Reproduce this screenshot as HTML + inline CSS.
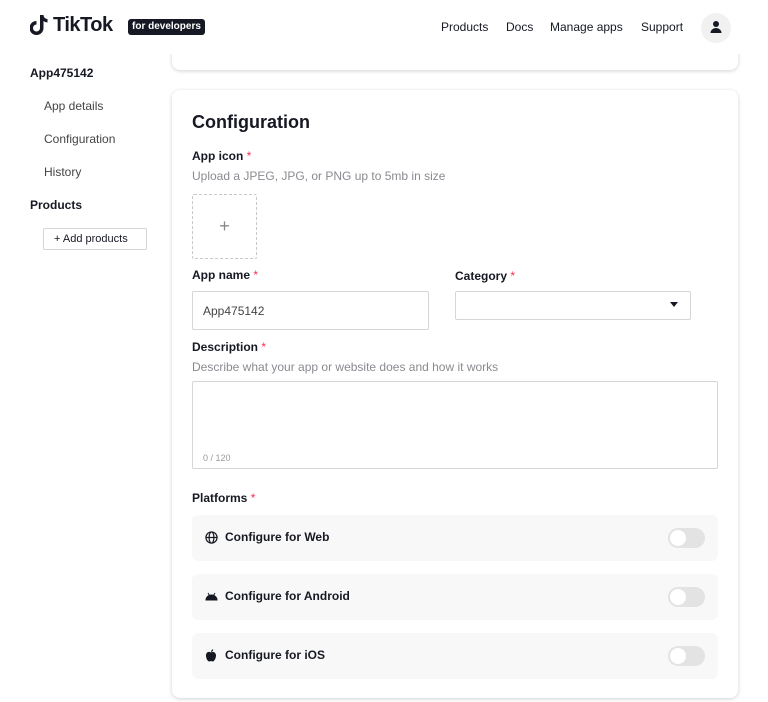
<!DOCTYPE html><html><head><style>
*{box-sizing:border-box;margin:0;padding:0}
body{width:768px;height:702px;overflow:hidden;background:#fff;font-family:"Liberation Sans",sans-serif;color:#161823;position:relative}
.a{position:absolute}
.hdr{position:absolute;left:0;top:0;width:768px;height:54px;background:#fff;z-index:5}
.nav{font-size:12px;top:20px;color:#161823}
.card{position:absolute;left:172px;width:566px;background:#fff;border-radius:8px;box-shadow:0 1px 4px rgba(0,0,0,.18)}
.lbl{position:absolute;left:20px;font-size:12px;font-weight:bold}
.lbl span{color:#fe2c55;font-weight:normal}
.hint{position:absolute;left:20px;font-size:12px;color:#8a8b91}
.box{position:absolute;border:1px solid #d6d6d9;border-radius:2px}
.pl{position:absolute;left:20px;width:526px;height:46px;background:#f8f8f8;border-radius:6px}
.pl b{position:absolute;left:33px;top:15px;font-size:12px}
.tg{position:absolute;right:13px;top:13px;width:37px;height:20px;border-radius:10px;background:#e3e3e4}
.tg:after{content:"";position:absolute;left:2px;top:2px;width:16px;height:16px;border-radius:50%;background:#fff}
.ic{position:absolute;left:13px;top:16px}
</style></head><body>
<div class="card" style="top:20px;height:50px"></div>
<div class="hdr">
<svg class="a" style="left:30px;top:14px" width="20" height="22" viewBox="0 0 20 22"><path d="M10 1v13a3.5 3.5 0 1 1-3.5-3.5V7a7 7 0 1 0 7 7V7a6 6 0 0 0 4 1.5V5A4 4 0 0 1 13.5 1z" fill="#161823"/></svg>
<div class="a" style="left:53px;top:14px;font-size:20px;font-weight:bold;letter-spacing:-.5px">TikTok</div>
<div class="a" style="left:128px;top:19px;background:#161823;color:#fff;font-size:10px;font-weight:bold;padding:1px 4px;border-radius:3px;height:16px;line-height:14px">for developers</div>
<div class="a nav" style="left:441px">Products</div>
<div class="a nav" style="left:506px">Docs</div>
<div class="a nav" style="left:550px">Manage apps</div>
<div class="a nav" style="left:641px">Support</div>
<div class="a" style="left:701px;top:13px;width:30px;height:30px;border-radius:50%;background:#f1f1f2"></div>
<svg class="a" style="left:709px;top:20px" width="14" height="14" viewBox="0 0 14 14"><circle cx="7" cy="4" r="3" fill="#161823"/><path d="M1.5 13a5.5 5 0 0 1 11 0z" fill="#161823"/></svg>
</div>
<div class="a" style="left:30px;top:66px;font-size:12px;font-weight:bold">App475142</div>
<div class="a" style="left:44px;top:99px;font-size:12px;color:#444">App details</div>
<div class="a" style="left:44px;top:132px;font-size:12px;color:#444">Configuration</div>
<div class="a" style="left:44px;top:165px;font-size:12px;color:#444">History</div>
<div class="a" style="left:30px;top:198px;font-size:12px;font-weight:bold">Products</div>
<div class="a" style="left:43px;top:228px;width:104px;height:22px;border:1px solid #d6d6d9;border-radius:2px;font-size:11px;line-height:20px;padding-left:10px">+ Add products</div>
<div class="card" style="top:90px;height:608px">
<div class="a" style="left:20px;top:22px;font-size:18px;font-weight:bold">Configuration</div>
<div class="lbl" style="top:59px">App icon <span>*</span></div>
<div class="hint" style="top:79px">Upload a JPEG, JPG, or PNG up to 5mb in size</div>
<div class="a" style="left:20px;top:104px;width:65px;height:65px;border:1px dashed #c8c8cb;border-radius:2px;text-align:center;line-height:63px;font-size:18px;color:#888">+</div>
<div class="lbl" style="top:178px">App name <span>*</span></div>
<div class="lbl" style="left:283px;top:179px">Category <span>*</span></div>
<div class="box" style="left:20px;top:201px;width:237px;height:39px;font-size:12px;padding:12px 10px;color:#444">App475142</div>
<div class="box" style="left:283px;top:201px;width:236px;height:29px"><div class="a" style="right:12px;top:10px;border:4px solid transparent;border-top:5px solid #161823;border-bottom:0"></div></div>
<div class="lbl" style="top:250px">Description <span>*</span></div>
<div class="hint" style="top:270px">Describe what your app or website does and how it works</div>
<div class="box" style="left:20px;top:291px;width:526px;height:88px"><div class="a" style="left:10px;top:71px;font-size:9px;color:#999">0 / 120</div></div>
<div class="lbl" style="top:401px">Platforms <span>*</span></div>
<div class="pl" style="top:425px"><svg class="ic" width="13" height="13" viewBox="0 0 14 14" fill="none" stroke="#161823" stroke-width="1.3"><circle cx="7" cy="7" r="6"/><ellipse cx="7" cy="7" rx="2.6" ry="6"/><path d="M1 7h12"/></svg><b>Configure for Web</b><div class="tg"></div></div>
<div class="pl" style="top:484px"><svg class="ic" style="top:18px" width="13" height="9" viewBox="0 0 13 9"><path d="M1 8a5.5 5 0 0 1 11 0z M3 1l1.5 2.5M10 1L8.5 3.5" fill="#161823" stroke="#161823"/></svg><b>Configure for Android</b><div class="tg"></div></div>
<div class="pl" style="top:543px"><svg class="ic" width="12" height="13" viewBox="0 0 12 13"><path d="M6 3.5C4 2 1 3 1 6.5S3 12.5 4.2 12.5c1 0 1.2-.5 1.8-.5s.8.5 1.8.5C9 12.5 11 9.5 11 6.5S8 2 6 3.5zM6 3c0-1.5 1-2.5 2.2-2.7C8.2 1.8 7.2 3 6 3z" fill="#161823"/></svg><b>Configure for iOS</b><div class="tg"></div></div>
</div>
</body></html>
